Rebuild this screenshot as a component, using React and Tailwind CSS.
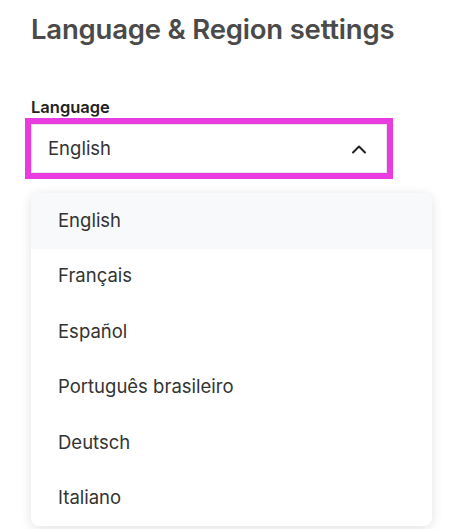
import React from 'react';

const LANGUAGES = ['English', 'Français', 'Español', 'Português brasileiro', 'Deutsch', 'Italiano'];

export default function App() {
  const selected = 'English';

  return (
    <div className="min-h-screen bg-white px-[31px] pt-[11px]" style={{ fontFamily: 'Inter, "Noto Sans", sans-serif' }}>
      <h1 className="text-[27.5px] font-semibold leading-[36px] text-[#4a4a4a] tracking-[-0.2px]">
        Language &amp; Region settings
      </h1>

      <label className="mt-[50px] block text-[16.5px] font-semibold leading-[20px] text-[#222]">Language</label>

      <div className="mt-[7px] w-[356px] h-[49px] flex items-center justify-between border border-[#e5e5e5] bg-white pl-[16px] pr-[19px] outline-[6px] outline-solid outline-[#e83ce0]">
        <span className="text-[18.5px] text-[#333]">{selected}</span>
        <svg width="16" height="10" viewBox="0 0 16 10" fill="none">
          <path d="M2 8.5 L8 2.5 L14 8.5" stroke="#222" strokeWidth="2" strokeLinecap="round" strokeLinejoin="round" />
        </svg>
      </div>

      <ul className="mt-[20px] w-[401px] rounded-lg bg-white shadow-[0_2px_12px_rgba(0,0,0,0.12)] overflow-hidden">
        {LANGUAGES.map(lang => (
          <li
            key={lang}
            className={`h-[55.5px] flex items-center pl-[27px] text-[18.5px] text-[#333] ${lang === selected ? 'bg-[#f8f9fb]' : ''}`}
          >
            {lang}
          </li>
        ))}
      </ul>
    </div>
  );
}
